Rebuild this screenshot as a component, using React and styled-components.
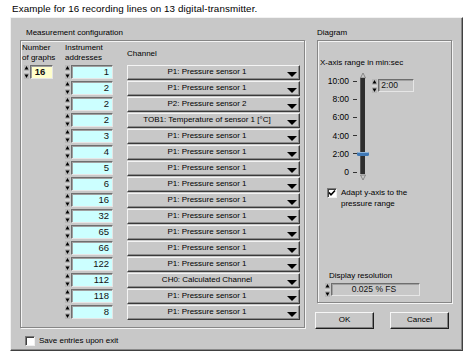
import React from 'react';
import styled, { createGlobalStyle } from 'styled-components';

const Global = createGlobalStyle`
  html, body { margin: 0; padding: 0; background: #ffffff; }
  body {
    font-family: "Liberation Sans", Arial, sans-serif;
    width: 474px; height: 364px; overflow: hidden; color: #000;
  }
`;

const Page = styled.div`
  padding: 3px 0 0 10px;
`;

const Title = styled.div`
  font-size: 9.8px;
  height: 14px;
  line-height: 12px;
  padding-left: 2px;
  letter-spacing: 0.1px;
`;

const Dialog = styled.div`
  box-sizing: border-box;
  width: 453px;
  height: 334px;
  background: #c8c8c8;
  border-top: 1px solid #f2f2f2;
  border-left: 1px solid #f2f2f2;
  border-right: 1px solid #404040;
  border-bottom: 1px solid #404040;
  box-shadow: inset -1px -1px 0 #8a8a8a;
  padding: 10px 0 0 9px;
  display: flex;
  flex-direction: column;
  font-size: 8px;
`;

const MainRow = styled.div`
  display: flex;
  gap: 12px;
`;

const Section = styled.div`
  display: flex;
  flex-direction: column;
  width: ${p => p.$w}px;
`;

const GroupLabel = styled.div`
  height: 12px;
  line-height: 10px;
  padding-left: ${p => p.$indent || 0}px;
`;

const Frame = styled.div`
  box-sizing: border-box;
  height: ${p => p.$h}px;
  border: 1px solid #868686;
  box-shadow: inset 1px 1px 0 #f4f4f4, 1px 1px 0 #f4f4f4;
`;

const ConfigFrame = styled(Frame)`
  display: flex;
  padding: 2px 0 0 1px;
`;

const Column = styled.div`
  display: flex;
  flex-direction: column;
  width: ${p => p.$w}px;
`;

const ColHeader = styled.div`
  height: 22px;
  line-height: 9.5px;
  display: flex;
  flex-direction: column;
  justify-content: ${p => (p.$bottom ? 'flex-end' : 'flex-start')};
  padding-bottom: ${p => (p.$bottom ? '7px' : '0')};
  box-sizing: border-box;
`;

const FieldRow = styled.div`
  height: 16px;
  display: flex;
  align-items: flex-start;
  padding-left: ${p => p.$pad || 0}px;
`;

const SpinBox = styled.svg`
  width: 5px;
  height: 14px;
  flex: none;
  margin-right: ${p => p.$gap || 1}px;
`;

const Field = styled.div`
  box-sizing: border-box;
  width: ${p => p.$w}px;
  height: ${p => p.$h || 14}px;
  background: ${p => p.$bg};
  border-top: 1px solid #6e6e6e;
  border-left: 1px solid #6e6e6e;
  border-right: 1px solid #e6e6e6;
  border-bottom: 1px solid #e6e6e6;
  box-shadow: inset 1px 1px 0 #a0a0a0;
  font-size: ${p => p.$fs || 9.5}px;
  font-weight: ${p => (p.$bold ? 700 : 400)};
  line-height: ${p => (p.$h || 14) - 2}px;
  text-align: ${p => p.$align || 'right'};
  padding-right: 3px;
  color: #111;
`;

const Dropdown = styled.div`
  box-sizing: border-box;
  position: relative;
  width: 173px;
  height: 15px;
  margin-bottom: 1px;
  background: #c8c8c8;
  border-top: 1px solid #f4f4f4;
  border-left: 1px solid #f4f4f4;
  border-right: 1px solid #3a3a3a;
  border-bottom: 1px solid #3a3a3a;
  box-shadow: inset -1px -1px 0 #8c8c8c;
  padding-right: 13px;
  text-align: center;
  line-height: 12px;
  font-size: 8px;
  white-space: nowrap;
`;

const DropArrow = styled.svg`
  position: absolute;
  right: 2px;
  top: 6px;
  width: 10px;
  height: 5px;
`;

const DiagramFrame = styled(Frame)`
  display: flex;
  flex-direction: column;
  padding: 17px 0 3px 2px;
`;

const Caption = styled.div`
  height: 14px;
  line-height: 10px;
`;

const SliderArea = styled.div`
  display: flex;
  align-items: flex-start;
`;

const TickCol = styled.div`
  display: flex;
  flex-direction: column;
`;

const TickRow = styled.div`
  height: 18.2px;
  display: flex;
  align-items: center;
  font-size: 8.5px;
`;

const TickLabel = styled.span`
  width: 29px;
  text-align: right;
`;

const TickDash = styled.span`
  width: 4px;
  margin-left: 4px;
  height: 1px;
  background: #333;
`;

const SliderSvg = styled.svg`
  width: 12px;
  height: 110px;
  flex: none;
`;

const ValueBox = styled.div`
  display: flex;
  align-items: flex-start;
  margin: 7px 0 0 3px;
`;

const CheckRow = styled.label`
  display: flex;
  align-items: flex-start;
  gap: 4px;
  padding-left: ${p => p.$pad || 0}px;
  margin-top: ${p => p.$mt || 0}px;
  line-height: 10.5px;
`;

const CheckBox = styled.span`
  box-sizing: border-box;
  flex: none;
  width: 10px;
  height: 10px;
  background: #fff;
  border-top: 1px solid #7a7a7a;
  border-left: 1px solid #7a7a7a;
  border-right: 1px solid #f0f0f0;
  border-bottom: 1px solid #f0f0f0;
  box-shadow: inset 1px 1px 0 #404040;
  display: flex;
  align-items: center;
  justify-content: center;
`;

const ResBlock = styled.div`
  margin-top: auto;
  padding-left: 5px;
  display: flex;
  flex-direction: column;
`;

const ResLabel = styled.div`
  height: 12px;
  line-height: 10px;
  padding-left: 4px;
`;

const ButtonRow = styled.div`
  display: flex;
  justify-content: space-between;
  width: 134px;
  margin: 9px 0 0 -2px;
`;

const Button = styled.div`
  box-sizing: border-box;
  width: 59px;
  height: 17px;
  background: #c8c8c8;
  border-top: 1px solid #f6f6f6;
  border-left: 1px solid #f6f6f6;
  border-right: 1px solid #1e1e1e;
  border-bottom: 1px solid #1e1e1e;
  box-shadow: inset -1px -1px 0 #808080;
  text-align: center;
  line-height: 14px;
  font-size: 8px;
`;

const Spin = ({ gap }) => (
  <SpinBox $gap={gap} viewBox="0 0 5 14">
    <rect x="0" y="0" width="5" height="14" fill="#b8b8b8" />
    <polygon points="0.5,4.5 2.5,1 4.5,4.5" fill="#000" />
    <rect x="0" y="6.5" width="5" height="1" fill="#f0f0f0" />
    <polygon points="0.5,9.5 2.5,13 4.5,9.5" fill="#000" />
  </SpinBox>
);

const Arrow = () => (
  <DropArrow viewBox="0 0 10 5">
    <polygon points="0,0 10,0 5,5" fill="#000" />
  </DropArrow>
);

const Check = () => (
  <svg width="8" height="8" viewBox="0 0 8 8">
    <polyline points="1,3.5 3,5.8 7,1.5" fill="none" stroke="#000" strokeWidth="1.6" />
  </svg>
);

const rows = [
  [1, 'P1: Pressure sensor 1'],
  [2, 'P1: Pressure sensor 1'],
  [2, 'P2: Pressure sensor 2'],
  [2, 'TOB1: Temperature of sensor 1 [°C]'],
  [3, 'P1: Pressure sensor 1'],
  [4, 'P1: Pressure sensor 1'],
  [5, 'P1: Pressure sensor 1'],
  [6, 'P1: Pressure sensor 1'],
  [16, 'P1: Pressure sensor 1'],
  [32, 'P1: Pressure sensor 1'],
  [65, 'P1: Pressure sensor 1'],
  [66, 'P1: Pressure sensor 1'],
  [122, 'P1: Pressure sensor 1'],
  [112, 'CH0: Calculated Channel'],
  [118, 'P1: Pressure sensor 1'],
  [8, 'P1: Pressure sensor 1'],
];

const ticks = ['10:00', '8:00', '6:00', '4:00', '2:00', '0'];

export default function App() {
  return (
    <>
      <Global />
      <Page>
        <Title>Example for 16 recording lines on 13 digital-transmitter.</Title>
        <Dialog>
          <MainRow>
            <Section $w={285}>
              <GroupLabel $indent={6}>Measurement configuration</GroupLabel>
              <ConfigFrame $h={288}>
                <Column $w={43}>
                  <ColHeader>
                    <span>Number</span>
                    <span>of graphs</span>
                  </ColHeader>
                  <FieldRow $pad={2}>
                    <Spin gap={1} />
                    <Field $w={23} $bg="#ffffcc" $bold $align="center" $fs={9.5}>16</Field>
                  </FieldRow>
                </Column>
                <Column $w={62}>
                  <ColHeader>
                    <span>Instrument</span>
                    <span>addresses</span>
                  </ColHeader>
                  {rows.map(([a], i) => (
                    <FieldRow key={i}>
                      <Spin gap={0} />
                      <Field $w={42} $bg="#ccffff">{a}</Field>
                    </FieldRow>
                  ))}
                </Column>
                <Column $w={173}>
                  <ColHeader $bottom>
                    <span>Channel</span>
                  </ColHeader>
                  {rows.map(([, c], i) => (
                    <Dropdown key={i}>
                      {c}
                      <Arrow />
                    </Dropdown>
                  ))}
                </Column>
              </ConfigFrame>
            </Section>
            <Section $w={135}>
              <GroupLabel>Diagram</GroupLabel>
              <DiagramFrame $h={263}>
                <Caption>X-axis range in min:sec</Caption>
                <SliderArea>
                  <TickCol>
                    {ticks.map(t => (
                      <TickRow key={t}>
                        <TickLabel>{t}</TickLabel>
                        <TickDash />
                      </TickRow>
                    ))}
                  </TickCol>
                  <SliderSvg viewBox="0 0 12 110">
                    <polygon points="3.5,6 6,1 8.5,6" fill="#c8c8c8" stroke="#777" strokeWidth="0.8" />
                    <rect x="3" y="6" width="5" height="96" fill="#2e2e2e" />
                    <rect x="3" y="6" width="1" height="96" fill="#555" />
                    <polygon points="3.5,103 8.5,103 6,108" fill="#c8c8c8" stroke="#777" strokeWidth="0.8" />
                    <rect x="0" y="80" width="12" height="4" rx="1.5" fill="#3f78b5" />
                    <rect x="1" y="80" width="10" height="1" fill="#8fb6dc" />
                  </SliderSvg>
                  <ValueBox>
                    <Spin gap={1} />
                    <Field $w={36} $h={13} $bg="#c8c8c8" $align="left" $fs={8.5}>
                      &nbsp;2:00
                    </Field>
                  </ValueBox>
                </SliderArea>
                <CheckRow $pad={7} $mt={6}>
                  <CheckBox><Check /></CheckBox>
                  <span>Adapt y-axis to the<br />pressure range</span>
                </CheckRow>
                <ResBlock>
                  <ResLabel>Display resolution</ResLabel>
                  <FieldRow>
                    <Spin gap={0} />
                    <Field $w={89} $h={13} $bg="#c8c8c8" $align="center" $fs={8.5}>0.025 % FS</Field>
                  </FieldRow>
                </ResBlock>
              </DiagramFrame>
              <ButtonRow>
                <Button>OK</Button>
                <Button>Cancel</Button>
              </ButtonRow>
            </Section>
          </MainRow>
          <CheckRow $pad={5} $mt={7}>
            <CheckBox />
            <span>Save entries upon exit</span>
          </CheckRow>
        </Dialog>
      </Page>
    </>
  );
}
